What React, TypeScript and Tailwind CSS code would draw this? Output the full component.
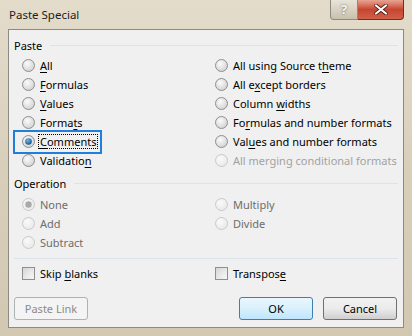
import { ReactNode } from "react";

const font = { fontFamily: '"Noto Sans", "Open Sans", sans-serif' };

type RadioState = "on" | "off" | "disabled" | "disabledOn";

const Radio = ({ state }: { state: RadioState }) => {
  const disabled = state === "disabled" || state === "disabledOn";
  return (
    <svg width="13" height="13" viewBox="0 0 13 13" className="shrink-0">
      <defs>
        <radialGradient id="rg" cx="0.4" cy="0.35" r="0.7">
          <stop offset="0" stopColor="#fbfbfb" />
          <stop offset="1" stopColor="#d0d0d0" />
        </radialGradient>
        <radialGradient id="rgd" cx="0.4" cy="0.35" r="0.7">
          <stop offset="0" stopColor="#fafafa" />
          <stop offset="1" stopColor="#e8e8e8" />
        </radialGradient>
        <radialGradient id="dot" cx="0.4" cy="0.35" r="0.7">
          <stop offset="0" stopColor="#6fb6ea" />
          <stop offset="1" stopColor="#0d4f85" />
        </radialGradient>
      </defs>
      <circle
        cx="6.5"
        cy="6.5"
        r="6"
        fill={disabled ? "url(#rgd)" : "url(#rg)"}
        stroke={disabled ? "#c9c9c9" : "#8f8f8f"}
        strokeWidth="1"
      />
      {state === "on" && <circle cx="6.5" cy="6.5" r="3.3" fill="url(#dot)" />}
      {state === "disabledOn" && (
        <circle cx="6.5" cy="6.5" r="3.2" fill="#a9a9a9" />
      )}
    </svg>
  );
};

const Checkbox = () => (
  <span className="w-[13px] h-[13px] shrink-0 border border-[#8f8f8f] bg-gradient-to-br from-[#d6d6d6] to-[#f6f6f6] p-[2px]">
    <span className="block w-full h-full bg-gradient-to-br from-[#dcdcdc] to-[#f4f4f4]" />
  </span>
);

// label with underlined mnemonic letter at index u
const Label = ({ text, u }: { text: string; u?: number }) =>
  u === undefined ? (
    <>{text}</>
  ) : (
    <>
      {text.slice(0, u)}
      <span className="underline underline-offset-2">{text[u]}</span>
      {text.slice(u + 1)}
    </>
  );

const Option = ({
  text,
  u,
  state = "off",
  tone = "text-black",
  focus,
}: {
  text: string;
  u?: number;
  state?: RadioState;
  tone?: string;
  focus?: boolean;
}) => (
  <div className="h-[19px] flex items-center relative whitespace-nowrap">
    <Radio state={state} />
    <span
      className={`ml-[5px] leading-none ${tone} ${
        focus ? "outline outline-1 outline-dotted outline-black outline-offset-[1px]" : ""
      }`}
    >
      <Label text={text} u={u} />
    </span>
    {focus && (
      <div className="absolute left-[-9px] top-[-2px] w-[89px] h-[24px] border-2 border-[#1f7fdb]" />
    )}
  </div>
);

const Group = ({ title, children }: { title: string; children: ReactNode }) => (
  <div>
    <div className="h-4 flex items-center pl-[5px] pr-[5px]">
      <span className="leading-none">{title}</span>
      <div className="flex-1 h-px bg-[#dde3e8] ml-2" />
    </div>
    {children}
  </div>
);

const Btn = ({ kind, children }: { kind: "ok" | "normal" | "disabled"; children: ReactNode }) => {
  const styles = {
    ok: "border-[#3c7fb1] bg-gradient-to-b from-[#eaf6fd] via-[#d9f0fc] to-[#bee6fd] text-black",
    normal: "border-[#707070] bg-gradient-to-b from-[#f2f2f2] via-[#ebebeb] to-[#cfcfcf] text-black",
    disabled: "border-[#adb2b5] bg-[#f4f4f4] text-[#8a8a8a]",
  }[kind];
  return (
    <div className={`w-[74px] h-[23px] rounded-[3px] border flex items-center justify-center leading-none ${styles}`}>
      {children}
    </div>
  );
};

const App = () => {
  return (
    <div
      className="w-[412px] h-[336px] bg-gradient-to-b from-[#e4dccb] via-[#d8cfbb] to-[#d2c8b2] flex flex-col text-[11px] text-black overflow-hidden"
      style={font}
    >
      <div className="h-[29px] flex items-start pl-[9px]">
        <span className="text-[11.5px] mt-[9px] leading-none text-[#1c1c1c]">Paste Special</span>
        <div className="ml-auto mr-[8px] flex h-[20px]">
          <div className="w-[28px] h-full rounded-bl-[4px] border border-t-0 border-[#8e8a80] bg-gradient-to-b from-[#e9e4d9] to-[#c9c0ad] flex items-center justify-center text-[13px] font-bold text-[#f6f6f6] [text-shadow:0_0_2px_#555]">
            ?
          </div>
          <div className="w-[46px] h-full rounded-br-[4px] border border-l-0 border-t-0 border-[#7a2a20] bg-gradient-to-b from-[#e8a493] via-[#c7452f] to-[#d0604a] flex items-center justify-center">
            <svg width="14" height="11" viewBox="0 0 14 11">
              <path d="M2 1.5 L12 9.5 M12 1.5 L2 9.5" stroke="#4a1a14" strokeWidth="3.6" strokeLinecap="round" />
              <path d="M2 1.5 L12 9.5 M12 1.5 L2 9.5" stroke="#ffffff" strokeWidth="2.2" strokeLinecap="round" />
            </svg>
          </div>
        </div>
      </div>
      <div className="mx-[8px] h-[299px] border border-[#8d8a82] bg-[#f0f0f0] pt-[7px] flex flex-col">
        <Group title="Paste">
          <div className="grid grid-cols-[193px_1fr] pl-[13px] mt-[3px]">
            <div>
              <Option text="All" u={0} />
              <Option text="Formulas" u={0} />
              <Option text="Values" u={0} />
              <Option text="Formats" u={5} />
              <Option text="Comments" u={0} state="on" focus />
              <Option text="Validation" u={9} />
            </div>
            <div>
              <Option text="All using Source theme" u={18} />
              <Option text="All except borders" u={5} />
              <Option text="Column widths" u={7} />
              <Option text="Formulas and number formats" u={2} />
              <Option text="Values and number formats" u={3} />
              <Option text="All merging conditional formats" state="disabled" tone="text-[#a2a2a2]" />
            </div>
          </div>
        </Group>
        <div className="mt-[5px]">
          <Group title="Operation">
            <div className="grid grid-cols-[193px_1fr] pl-[13px] mt-[4px]">
              <div>
                <Option text="None" state="disabledOn" tone="text-[#6d6d6d]" />
                <Option text="Add" state="disabled" tone="text-[#6d6d6d]" />
                <Option text="Subtract" state="disabled" tone="text-[#6d6d6d]" />
              </div>
              <div>
                <Option text="Multiply" state="disabled" tone="text-[#6d6d6d]" />
                <Option text="Divide" state="disabled" tone="text-[#6d6d6d]" />
              </div>
            </div>
          </Group>
        </div>
        <div className="mt-[6px] mx-[5px] h-px bg-[#dde3e8]" />
        <div className="grid grid-cols-[193px_1fr] pl-[13px] mt-[5px]">
          <div className="h-[19px] flex items-center">
            <Checkbox />
            <span className="ml-[5px] leading-none">
              <Label text="Skip blanks" u={5} />
            </span>
          </div>
          <div className="h-[19px] flex items-center">
            <Checkbox />
            <span className="ml-[5px] leading-none">
              <Label text="Transpose" u={8} />
            </span>
          </div>
        </div>
        <div className="mt-[14px] flex pl-[5px] pr-[6px]">
          <Btn kind="disabled">Paste Link</Btn>
          <div className="ml-auto flex gap-[10px]">
            <Btn kind="ok">OK</Btn>
            <Btn kind="normal">Cancel</Btn>
          </div>
        </div>
      </div>
    </div>
  );
};

export default App;
